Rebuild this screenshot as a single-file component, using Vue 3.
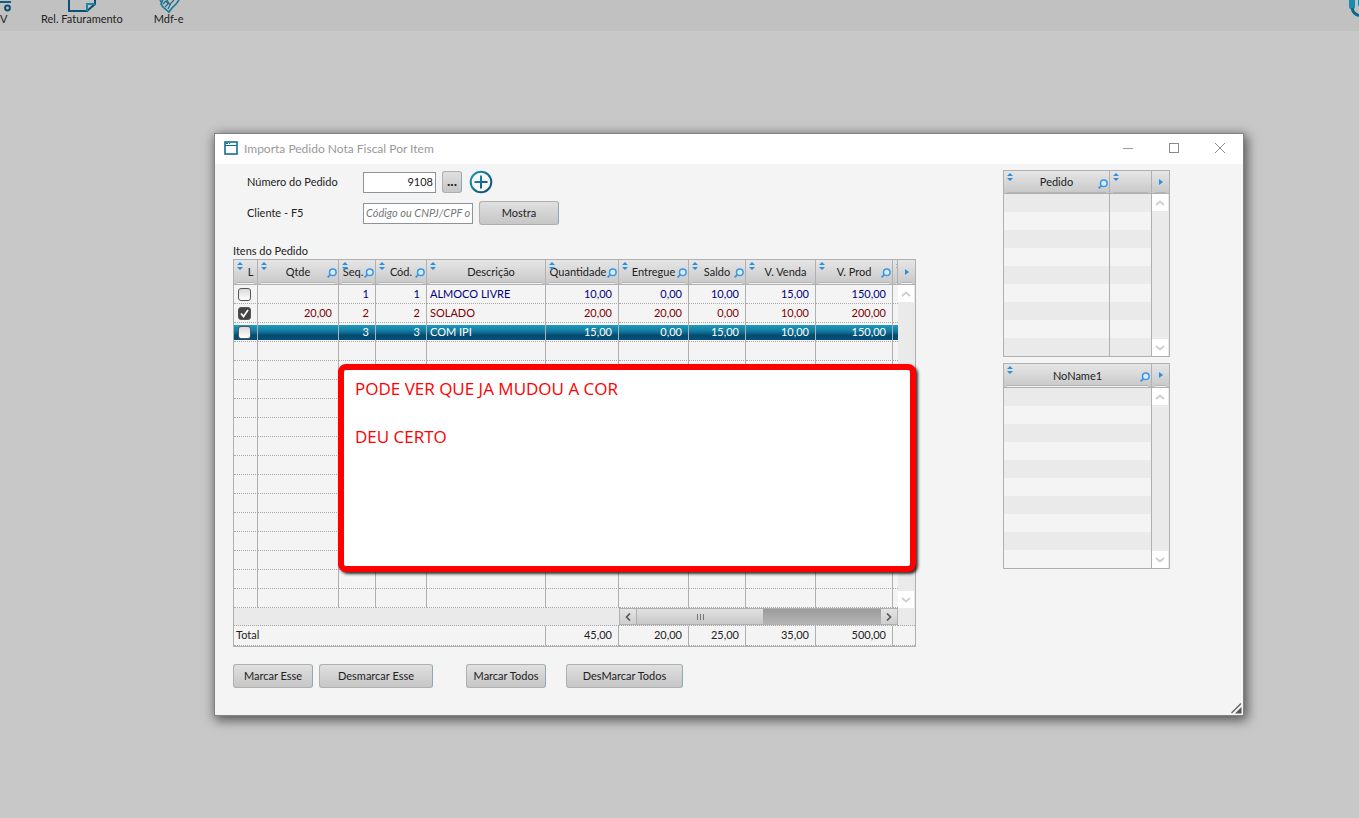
<template>
  <div class="desktop">
    <nav class="toolbar">
      <button class="tool tool-first">
        <svg width="12" height="14" viewBox="0 0 12 14">
          <path d="M0 2H11" stroke="#0f5f80" stroke-width="2" />
          <circle cx="7.500" cy="8" r="2.400" fill="none" stroke="#0b5173" stroke-width="2" />
        </svg>
        <span>V</span>
      </button>
      <button class="tool tool-report">
        <svg width="28" height="14" viewBox="0 0 28 14">
          <path d="M1 0V11H19L27 4V0" fill="none" stroke="#0b5173" stroke-width="2" />
          <path d="M19 11V4H27" fill="none" stroke="#1b86a8" stroke-width="2" />
        </svg>
        <span>Rel. Faturamento</span>
      </button>
      <button class="tool">
        <svg width="22" height="14" viewBox="0 0 22 14">
          <path d="M2 0L4 3M5 0L3 4L5 7L11 12L14 8L18 4L21 0" fill="none" stroke="#15789b" stroke-width="1.600" />
          <path d="M5 4L8 1L10 4L7 7M10 9L13 3L16 0M9 0L12 5" fill="none" stroke="#1b6d8c" stroke-width="1.200" />
        </svg>
        <span>Mdf-e</span>
      </button>
      <button class="tool tool-help" aria-label="Suporte">
        <svg width="24" height="18" viewBox="0 0 24 18">
          <rect x="0" y="-2" width="6" height="11" rx="2.500" fill="#1b8aae" />
          <path d="M3 8C4 13 8 16 14 16" fill="none" stroke="#0e6688" stroke-width="3" />
          <path d="M9.500 0V6" stroke="#1b8aae" stroke-width="1" />
        </svg>
      </button>
    </nav>

    <section class="window">
      <header class="titlebar">
        <svg class="app-icon" width="14" height="14" viewBox="0 0 14 14">
          <rect x="1" y="1" width="12" height="12" fill="none" stroke="#12708f" stroke-width="1.600" />
          <path d="M1 4.500H13" stroke="#12708f" stroke-width="1" />
          <path d="M2 2.500H4M5 2.500H6" stroke="#12708f" stroke-width="1" />
        </svg>
        <h1>Importa Pedido Nota Fiscal Por Item</h1>
        <button class="win-btn" aria-label="Minimizar">
          <svg width="12" height="12" viewBox="0 0 12 12"><path d="M1 6.500H11" stroke="#999" /></svg>
        </button>
        <button class="win-btn" aria-label="Maximizar">
          <svg width="12" height="12" viewBox="0 0 12 12"><rect x="1.500" y="1.500" width="9" height="9" fill="none" stroke="#8a8a8a" /></svg>
        </button>
        <button class="win-btn" aria-label="Fechar">
          <svg width="12" height="12" viewBox="0 0 12 12"><path d="M1 1L11 11M11 1L1 11" stroke="#8a8a8a" /></svg>
        </button>
      </header>

      <div class="window-body">
        <div class="main-col">
          <form class="order-form" @submit.prevent>
            <div class="field">
              <label for="numero">Número do Pedido</label>
              <input id="numero" v-model="numero" class="input-number" type="text">
              <button type="button" class="btn btn-dots">...</button>
              <button type="button" class="btn-add" aria-label="Adicionar">
                <svg width="24" height="24" viewBox="0 0 24 24">
                  <defs>
                    <linearGradient id="addGrad" x1="0" y1="0" x2="1" y2="1">
                      <stop offset="0" stop-color="#2097bd" />
                      <stop offset="1" stop-color="#06496c" />
                    </linearGradient>
                  </defs>
                  <circle cx="12" cy="12" r="10.300" fill="#f8f8f8" stroke="url(#addGrad)" stroke-width="2" />
                  <path d="M5.500 11H11V5.500H13V11H18.500V13H13V18.500H11V13H5.500Z" fill="url(#addGrad)" />
                </svg>
              </button>
            </div>
            <div class="field">
              <label for="cliente">Cliente - F5</label>
              <input id="cliente" class="input-client" type="text" placeholder="Código ou CNPJ/CPF ou Nome">
              <button type="button" class="btn btn-mostra">Mostra</button>
            </div>
          </form>

          <h2 class="grid-title">Itens do Pedido</h2>
          <div class="grid-box">
            <table class="grid">
              <colgroup>
                <col v-for="col in columns" :key="col.key" :class="'c-' + col.key">
                <col class="c-scroll">
              </colgroup>
              <thead>
                <tr>
                  <th v-for="col in columns" :key="col.key">
                    <div class="head-cell" :class="{ plain: !col.search, tight: col.tight }">
                      <svg class="sort" width="6" height="8" viewBox="0 0 6 8"><path d="M3 0L6 3H0ZM3 8L0 5H6Z" fill="#2b8fe0" /></svg>
                      <span class="head-text">{{ col.label }}</span>
                      <svg v-if="col.search" class="lens" width="10" height="10" viewBox="0 0 10 10"><circle cx="5.800" cy="4.200" r="3.300" fill="#d9ecfb" stroke="#3b96e6" stroke-width="1.500" /><path d="M3.400 6.600L0.600 9.400" stroke="#3b96e6" stroke-width="1.800" /></svg>
                    </div>
                  </th>
                  <th>
                    <div class="head-cell">
                      <svg class="next" width="4" height="6" viewBox="0 0 4 6"><path d="M0 0L4 3L0 6Z" fill="#2b8fe0" /></svg>
                    </div>
                  </th>
                </tr>
              </thead>
              <tbody>
                <tr v-for="(row, i) in rows" :key="i" :class="row.state">
                  <td class="check">
                    <input v-if="row.seq" v-model="row.marked" type="checkbox" :aria-label="'Marcar item ' + row.seq">
                  </td>
                  <td class="num">{{ row.qtde }}</td>
                  <td class="num">{{ row.seq }}</td>
                  <td class="num">{{ row.cod }}</td>
                  <td>{{ row.desc }}</td>
                  <td class="num">{{ row.quantidade }}</td>
                  <td class="num">{{ row.entregue }}</td>
                  <td class="num">{{ row.saldo }}</td>
                  <td class="num">{{ row.venda }}</td>
                  <td class="num">{{ row.prod }}</td>
                  <td class="last"></td>
                  <td class="track">
                    <button v-if="i === 0" class="scroll-btn" aria-label="Subir">
                      <svg width="10" height="6" viewBox="0 0 10 6"><path d="M1 5L5 1.500L9 5" fill="none" stroke="#cfcfcf" stroke-width="2" /></svg>
                    </button>
                    <button v-if="i === rows.length - 1" class="scroll-btn down" aria-label="Descer">
                      <svg width="10" height="6" viewBox="0 0 10 6"><path d="M1 1L5 4.500L9 1" fill="none" stroke="#cfcfcf" stroke-width="2" /></svg>
                    </button>
                  </td>
                </tr>
              </tbody>
              <tfoot>
                <tr class="hscroll-row">
                  <td colspan="6"></td>
                  <td colspan="5">
                    <div class="hscroll">
                      <button aria-label="Esquerda"><svg width="6" height="8" viewBox="0 0 6 8"><path d="M5 0.500L1.500 4L5 7.500" fill="none" stroke="#555" stroke-width="1.600" /></svg></button>
                      <div class="thumb"><i></i><i></i><i></i></div>
                      <div class="rail"></div>
                      <button aria-label="Direita"><svg width="6" height="8" viewBox="0 0 6 8"><path d="M1 0.500L4.500 4L1 7.500" fill="none" stroke="#555" stroke-width="1.600" /></svg></button>
                    </div>
                  </td>
                  <td></td>
                </tr>
                <tr class="total-row">
                  <td colspan="5">Total</td>
                  <td class="num">45,00</td>
                  <td class="num">20,00</td>
                  <td class="num">25,00</td>
                  <td class="num">35,00</td>
                  <td class="num">500,00</td>
                  <td colspan="2"></td>
                </tr>
              </tfoot>
            </table>

            <div class="note">
              <p>PODE VER QUE JA MUDOU A COR</p>
              <p>DEU CERTO</p>
            </div>
          </div>

          <div class="actions">
            <button class="btn w-80">Marcar Esse</button>
            <button class="btn w-114">Desmarcar Esse</button>
            <button class="btn w-80 gap-left">Marcar Todos</button>
            <button class="btn w-117 gap-mid">DesMarcar Todos</button>
          </div>
        </div>

        <aside class="side-col">
          <div v-for="panel in panels" :key="panel.title" class="side-box">
            <table class="side-grid">
              <colgroup>
                <col>
                <col v-if="panel.extra" class="c-extra">
                <col class="c-scroll">
              </colgroup>
              <thead>
                <tr>
                  <th>
                    <div class="head-cell">
                      <svg class="sort" width="6" height="8" viewBox="0 0 6 8"><path d="M3 0L6 3H0ZM3 8L0 5H6Z" fill="#2b8fe0" /></svg>
                      <span class="head-text">{{ panel.title }}</span>
                      <svg class="lens" width="10" height="10" viewBox="0 0 10 10"><circle cx="5.800" cy="4.200" r="3.300" fill="#d9ecfb" stroke="#3b96e6" stroke-width="1.500" /><path d="M3.400 6.600L0.600 9.400" stroke="#3b96e6" stroke-width="1.800" /></svg>
                    </div>
                  </th>
                  <th v-if="panel.extra">
                    <div class="head-cell">
                      <svg class="sort" width="6" height="8" viewBox="0 0 6 8"><path d="M3 0L6 3H0ZM3 8L0 5H6Z" fill="#2b8fe0" /></svg>
                    </div>
                  </th>
                  <th>
                    <div class="head-cell">
                      <svg class="next" width="4" height="6" viewBox="0 0 4 6"><path d="M0 0L4 3L0 6Z" fill="#2b8fe0" /></svg>
                    </div>
                  </th>
                </tr>
              </thead>
              <tbody>
                <tr v-for="n in panel.rows" :key="n">
                  <td></td>
                  <td v-if="panel.extra"></td>
                  <td class="track">
                    <button v-if="n === 1" class="scroll-btn" aria-label="Subir">
                      <svg width="10" height="6" viewBox="0 0 10 6"><path d="M1 5L5 1.500L9 5" fill="none" stroke="#cfcfcf" stroke-width="2" /></svg>
                    </button>
                    <button v-if="n === panel.rows" class="scroll-btn down" aria-label="Descer">
                      <svg width="10" height="6" viewBox="0 0 10 6"><path d="M1 1L5 4.500L9 1" fill="none" stroke="#cfcfcf" stroke-width="2" /></svg>
                    </button>
                  </td>
                </tr>
              </tbody>
            </table>
          </div>
        </aside>
      </div>

      <svg class="grip" width="11" height="11" viewBox="0 0 11 11">
        <path d="M0.500 10L10 0.500" stroke="#666" stroke-width="1.400" />
        <path d="M10.500 4V10.500H4Z" fill="#555" />
      </svg>
    </section>
  </div>
</template>

<script setup>
import { ref } from 'vue'

const numero = ref('9108')

const columns = [
  { key: 'l', label: 'L' },
  { key: 'qtde', label: 'Qtde', search: true },
  { key: 'seq', label: 'Seq.', search: true, tight: true },
  { key: 'cod', label: 'Cód.', search: true },
  { key: 'desc', label: 'Descrição' },
  { key: 'quant', label: 'Quantidade', search: true, tight: true },
  { key: 'entregue', label: 'Entregue', search: true },
  { key: 'saldo', label: 'Saldo', search: true },
  { key: 'venda', label: 'V. Venda' },
  { key: 'prod', label: 'V. Prod', search: true },
  { key: 'more', label: '' }
]

const items = [
  { state: 'pending', marked: false, qtde: '', seq: 1, cod: 1, desc: 'ALMOCO LIVRE', quantidade: '10,00', entregue: '0,00', saldo: '10,00', venda: '15,00', prod: '150,00' },
  { state: 'done', marked: true, qtde: '20,00', seq: 2, cod: 2, desc: 'SOLADO', quantidade: '20,00', entregue: '20,00', saldo: '0,00', venda: '10,00', prod: '200,00' },
  { state: 'selected', marked: false, qtde: '', seq: 3, cod: 3, desc: 'COM IPI', quantidade: '15,00', entregue: '0,00', saldo: '15,00', venda: '10,00', prod: '150,00' }
]

// linhas vazias até completar as 17 do grid
const rows = ref([...items, ...Array.from({ length: 14 }, () => ({}))])

const panels = [
  { title: 'Pedido', extra: true, rows: 9 },
  { title: 'NoName1', extra: false, rows: 10 }
]
</script>

<style>
body {
  background: #c8c8c8;
}
</style>

<style scoped>
.desktop {
  min-height: 100vh;
  box-sizing: border-box;
  overflow: hidden;
  background: #c8c8c8;
  font-family: Lato, 'Open Sans', sans-serif;
  font-size: 11px;
  color: #222;
}
.desktop * {
  box-sizing: border-box;
}
button, input {
  font-family: inherit;
  font-size: inherit;
  color: inherit;
  margin: 0;
}
svg {
  display: block;
}

/* BARRA DE FERRAMENTAS */
.toolbar {
  height: 31px;
  background: #c1c1c1;
  display: flex;
  align-items: flex-start;
}
.tool {
  border: none;
  background: none;
  padding: 0;
  display: flex;
  flex-direction: column;
  align-items: center;
  line-height: 14px;
}
.tool svg {
  margin-bottom: -2px;
}
.tool-first {
  margin-right: 29px;
  align-items: flex-start;
}
.tool-report {
  margin-right: 31px;
}
.tool-help {
  margin: 0 -14px 0 auto;
}

/* JANELA */
.window {
  position: relative;
  margin: 102px 115px 0 214px;
  border: 1px solid #828282;
  background: #f4f4f4;
  box-shadow: 2px 3px 11px 1px rgba(0, 0, 0, 0.6);
}
.titlebar {
  height: 30px;
  background: #fff;
  display: flex;
  align-items: center;
  padding: 0 0 2px 9px;
}
.titlebar h1 {
  flex: 1;
  margin: 0 0 0 6px;
  font-size: 12px;
  font-weight: 400;
  color: #999;
}
.win-btn {
  width: 46px;
  height: 28px;
  border: none;
  background: none;
  padding: 0;
  display: flex;
  align-items: center;
  justify-content: center;
}
.window-body {
  display: flex;
  gap: 87px;
  padding: 6px 73px 27px 18px;
}
.main-col {
  flex: 1;
  min-width: 0;
}
.side-col {
  width: 167px;
  display: flex;
  flex-direction: column;
  gap: 6px;
}
.grip {
  position: absolute;
  right: 1px;
  bottom: 1px;
}

/* FORMULARIO */
.order-form {
  padding-left: 14px;
}
.field {
  height: 24px;
  margin-bottom: 7px;
  display: flex;
  align-items: center;
}
.field label {
  width: 116px;
  padding-bottom: 2px;
}
.field input {
  height: 21px;
  border: 1px solid #8e9399;
  background: #fff;
  border-radius: 0;
  padding: 0 2px 1px;
  outline: none;
}
.input-number {
  width: 73px;
  text-align: right;
  margin-right: 6px;
}
.input-client {
  width: 110px;
  margin-right: 6px;
}
.input-client::placeholder {
  color: #777;
  font-style: italic;
  opacity: 1;
}
.btn {
  height: 24px;
  border: 1px solid #b0b0b0;
  border-right-color: #8fa9b0;
  border-radius: 3px;
  background: linear-gradient(#e0e0e0, #c6c6c6);
  padding: 0 0 2px;
  white-space: nowrap;
}
.btn-dots {
  width: 20px;
  height: 22px;
  margin-right: 7px;
  font-size: 14px;
  line-height: 14px;
  font-weight: 700;
}
.btn-mostra {
  width: 80px;
}
.btn-add {
  border: none;
  background: none;
  padding: 0;
}

/* GRID */
.grid-title {
  margin: 19px 0 1px;
  font-size: 11px;
  line-height: 14px;
  font-weight: 400;
}
.grid-box {
  position: relative;
  border: 1px solid #b0b0b0;
}
.side-box {
  border: 1px solid #b0b0b0;
}
table {
  width: 100%;
  table-layout: fixed;
  border-collapse: separate;
  border-spacing: 0;
}
.c-l { width: 24px; }
.c-qtde { width: 81px; }
.c-seq { width: 37px; }
.c-cod { width: 51px; }
.c-quant { width: 73px; }
.c-entregue { width: 70px; }
.c-saldo { width: 57px; }
.c-venda { width: 70px; }
.c-prod { width: 77px; }
.c-more { width: 5px; }
.c-scroll { width: 17px; }
.c-extra { width: 42px; }

th {
  height: 25px;
  padding: 0;
  overflow: hidden;
  font-weight: 400;
  background: linear-gradient(#e6e6e6, #c8c8c8);
  border-right: 1px solid #b0b0b0;
  border-bottom: 1px solid #b0b0b0;
}
.side-grid th {
  height: 23px;
}
.side-box + .side-box th {
  height: 24px;
}
th:last-child {
  border-right: none;
}
.head-cell {
  position: relative;
  height: 22px;
  margin: 0 3px;
  border-bottom: 1px solid #b4b4b4;
  box-shadow: 0 1px 0 #f2f2f2;
  display: flex;
  align-items: center;
  justify-content: center;
}
.side-grid .head-cell {
  height: 21px;
}
.head-cell.plain {
  padding-left: 10px;
}
.head-cell.tight {
  padding-right: 8px;
}
.head-text {
  white-space: nowrap;
}
.sort {
  position: absolute;
  left: 0;
  top: 1px;
}
.lens {
  position: absolute;
  right: -2px;
  top: 7px;
}

td {
  height: 19px;
  padding: 0 6px 1px 3px;
  line-height: 16px;
  white-space: nowrap;
  border-right: 1px solid #b0b0b0;
  border-bottom: 1px dotted #a8a8a8;
}
.num {
  text-align: right;
}
td.check {
  padding: 0 0 0 4px;
}
td.last {
  border-right: none;
  padding: 0;
}
td.track {
  padding: 0;
  border: none;
  background: #eaeaea;
  vertical-align: top;
}
.scroll-btn {
  width: 16px;
  height: 17px;
  border: none;
  background: #fff;
  padding: 0;
  display: flex;
  align-items: center;
  justify-content: center;
}
tr:last-child .track {
  vertical-align: bottom;
}
.check input {
  appearance: none;
  display: block;
  width: 13px;
  height: 13px;
  border: 1px solid #555;
  border-radius: 3px;
  background: linear-gradient(#d8d8d8, #fff);
}
.check input:checked {
  background: #444 url("data:image/svg+xml,%3Csvg xmlns='http://www.w3.org/2000/svg' viewBox='0 0 11 11'%3E%3Cpath d='M2 5.500L4.500 8.500L9 2' fill='none' stroke='white' stroke-width='1.700'/%3E%3C/svg%3E");
}
.pending {
  color: #000080;
}
.done {
  color: #800000;
}
.selected {
  color: #fff;
}
.selected td:not(.track) {
  background: linear-gradient(#1f9bc0, #137b9f 40%, #044a70 70%, #05507a) 0 2px / 100% 15px no-repeat;
}

/* RODAPE DO GRID */
.hscroll-row td {
  height: 18px;
  padding: 0;
  border-right: none;
  background: #eaeaea;
}
.hscroll {
  height: 17px;
  border: 1px solid #b0b0b0;
  display: flex;
}
.hscroll button {
  width: 16px;
  border: none;
  padding: 0;
  background: linear-gradient(#e4e4e4, #cecece);
  display: flex;
  align-items: center;
  justify-content: center;
}
.thumb {
  flex: 1;
  border-left: 1px solid #b0b0b0;
  background: linear-gradient(#e0e0e0, #c8c8c8);
  display: flex;
  align-items: center;
  justify-content: center;
  gap: 2px;
}
.thumb i {
  width: 1px;
  height: 6px;
  background: #777;
}
.rail {
  width: 118px;
  background: linear-gradient(#9c9c9c, #b4b4b4);
}
.total-row td {
  height: 20px;
}
.total-row td:last-child {
  border-right: none;
}
.total-row td:first-child {
  padding-left: 2px;
}

/* PAINEIS LATERAIS */
.side-grid td {
  height: 18px;
  padding: 0;
  border-bottom: none;
}
.side-grid tr:nth-child(odd) td {
  background: #eaeaea;
}
.side-grid td.track {
  background: #eaeaea;
}

/* ANOTACAO */
.note {
  position: absolute;
  top: 104px;
  bottom: 74px;
  left: 104px;
  right: -1px;
  border: 6px solid #f00;
  border-radius: 8px;
  background: #fff;
  box-shadow: 2px 2px 3px rgba(0, 0, 0, 0.8);
  padding: 7px 11px;
  color: #f00;
  font-family: 'Open Sans', sans-serif;
  font-size: 17px;
}
.note p {
  margin: 0 0 24px;
  line-height: 24px;
}

/* BOTOES */
.actions {
  display: flex;
  gap: 6px;
  margin-top: 17px;
}
.w-80 { width: 80px; }
.w-114 { width: 114px; }
.w-117 { width: 117px; }
.gap-left { margin-left: 27px; }
.gap-mid { margin-left: 14px; }
</style>
